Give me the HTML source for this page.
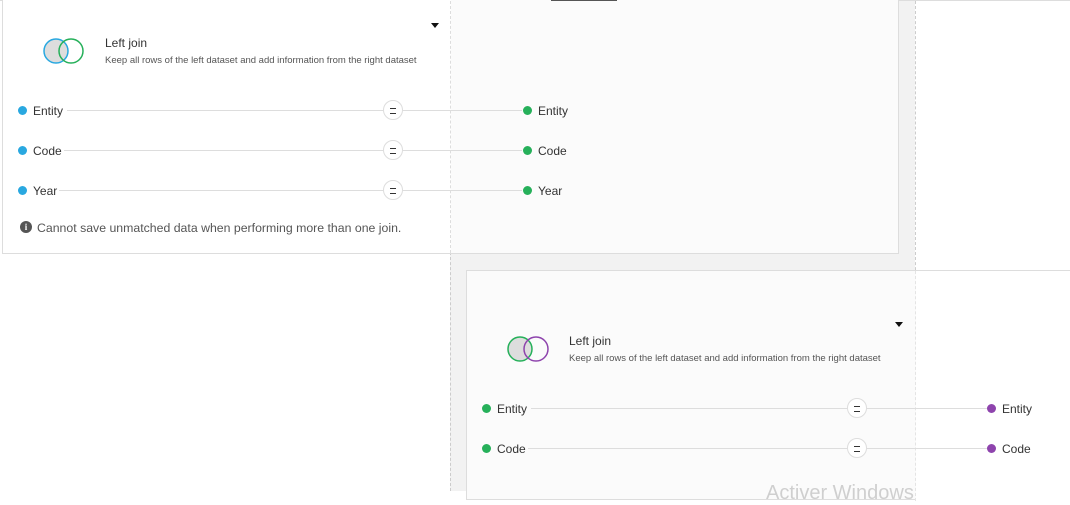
<!DOCTYPE html>
<html><head><meta charset="utf-8"><style>
*{margin:0;padding:0;box-sizing:border-box}
body{width:1070px;height:491px;overflow:hidden;background:#fff;position:relative;font-family:"Liberation Sans",sans-serif;color:#333}
.a{position:absolute}
.line{position:absolute;height:1px;background:#ddd}
.dot{position:absolute;width:9px;height:9px;border-radius:50%}
.lbl{position:absolute;font-size:12px;color:#333;line-height:14px}
.eq{position:absolute;width:20px;height:20px;border-radius:50%;border:1px solid #ddd;background:#fff}
.eq::after{content:"";position:absolute;left:6px;top:7px;width:6px;height:4px;border-top:1px solid #333;border-bottom:1px solid #333}
.t{position:absolute;font-size:12px;color:#333}
.s{position:absolute;font-size:9.5px;color:#555;white-space:nowrap}
.arr{position:absolute;width:0;height:0;border-left:4px solid transparent;border-right:4px solid transparent;border-top:5px solid #111}
</style></head><body>
<div class="a" style="left:0;top:0;width:1070px;height:1px;background:#ddd"></div>
<div class="a" style="left:450px;top:1px;width:465px;height:490px;background:#f2f2f2"></div>
<div class="a" style="left:915px;top:1px;width:0;height:490px;border-left:1px dashed #ccc"></div>
<div class="a" style="left:450px;top:1px;width:0;height:490px;border-left:1px dashed #ccc"></div>
<!-- card1 -->
<div class="a" style="left:2px;top:0;width:897px;height:254px;background:#fff;border:1px solid #ddd;border-top:none"></div>
<div class="a" style="left:451px;top:0;width:447px;height:253px;background:#fbfbfb"></div>
<div class="a" style="left:450px;top:1px;width:0;height:252px;border-left:1px dashed #ddd"></div>
<div class="a" style="left:551px;top:0;width:66px;height:1px;background:#555"></div>
<svg class="a" style="left:40px;top:35px" width="50" height="32"><circle cx="16" cy="16" r="12" fill="#ddd" stroke="#29a8e0" stroke-width="1.5"/><circle cx="31" cy="16" r="12" fill="none" stroke="#26b05a" stroke-width="1.5"/></svg>
<div class="t" style="left:105px;top:36px">Left join</div>
<div class="s" style="left:105px;top:55px">Keep all rows of the left dataset and add information from the right dataset</div>
<div class="arr" style="left:431px;top:23px"></div>

<div class="dot" style="left:18px;top:106px;background:#29a8e0"></div><div class="lbl" style="left:33px;top:104px">Entity</div><div class="line" style="left:67px;top:110px;width:455px"></div><div class="eq" style="left:383px;top:100px"></div><div class="dot" style="left:523px;top:106px;background:#26b05a"></div><div class="lbl" style="left:538px;top:104px">Entity</div>
<div class="dot" style="left:18px;top:146px;background:#29a8e0"></div><div class="lbl" style="left:33px;top:144px">Code</div><div class="line" style="left:64px;top:150px;width:458px"></div><div class="eq" style="left:383px;top:140px"></div><div class="dot" style="left:523px;top:146px;background:#26b05a"></div><div class="lbl" style="left:538px;top:144px">Code</div>
<div class="dot" style="left:18px;top:186px;background:#29a8e0"></div><div class="lbl" style="left:33px;top:184px">Year</div><div class="line" style="left:59px;top:190px;width:463px"></div><div class="eq" style="left:383px;top:180px"></div><div class="dot" style="left:523px;top:186px;background:#26b05a"></div><div class="lbl" style="left:538px;top:184px">Year</div>
<div class="a" style="left:20px;top:221px;width:12px;height:12px;border-radius:50%;background:#555;color:#fff;font-size:9px;font-weight:bold;text-align:center;line-height:12px;font-family:'Liberation Serif',serif">i</div>
<div class="lbl" style="left:37px;top:221px;color:#555;font-size:12.3px">Cannot save unmatched data when performing more than one join.</div>
<!-- card2 -->
<div class="a" style="left:466px;top:270px;width:610px;height:230px;background:#fbfbfb;border:1px solid #ddd"></div>
<div class="a" style="left:916px;top:271px;width:160px;height:230px;background:#fff"></div>
<div class="a" style="left:915px;top:271px;width:0;height:230px;border-left:1px dashed #e4e4e4"></div>
<svg class="a" style="left:504px;top:333px" width="50" height="32"><circle cx="16" cy="16" r="12" fill="#ddd" stroke="#26b05a" stroke-width="1.5"/><circle cx="32" cy="16" r="12" fill="none" stroke="#8e44ad" stroke-width="1.5"/></svg>
<div class="t" style="left:569px;top:334px">Left join</div>
<div class="s" style="left:569px;top:353px">Keep all rows of the left dataset and add information from the right dataset</div>
<div class="arr" style="left:895px;top:322px"></div>
<div class="dot" style="left:482px;top:404px;background:#26b05a"></div><div class="lbl" style="left:497px;top:402px">Entity</div><div class="line" style="left:531px;top:408px;width:456px"></div><div class="eq" style="left:847px;top:398px"></div><div class="dot" style="left:987px;top:404px;background:#8e44ad"></div><div class="lbl" style="left:1002px;top:402px">Entity</div>
<div class="dot" style="left:482px;top:444px;background:#26b05a"></div><div class="lbl" style="left:497px;top:442px">Code</div><div class="line" style="left:528px;top:448px;width:459px"></div><div class="eq" style="left:847px;top:438px"></div><div class="dot" style="left:987px;top:444px;background:#8e44ad"></div><div class="lbl" style="left:1002px;top:442px">Code</div>
<div class="a" style="left:766px;top:482px;font-size:20px;color:#cfcfcf;white-space:nowrap">Activer Windows</div>
</body></html>
